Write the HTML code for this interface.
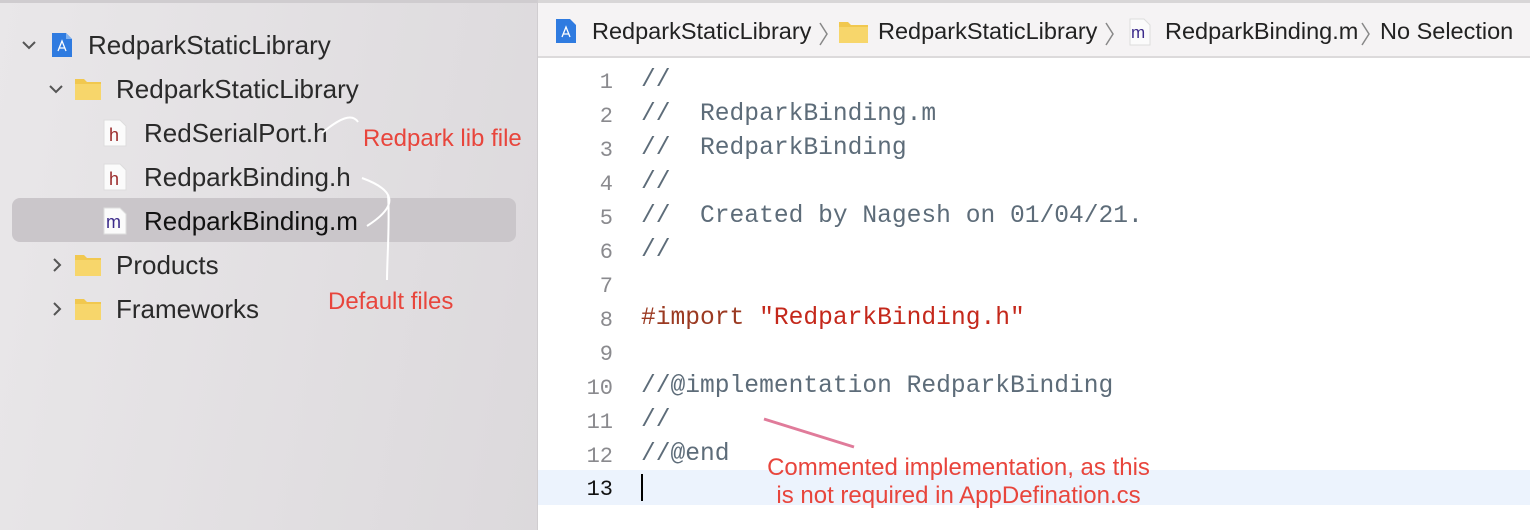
<!DOCTYPE html>
<html><head><style>
body{margin:0;width:1530px;height:530px;overflow:hidden;font-family:"Liberation Sans",sans-serif;background:#fff;position:relative}
#side{position:absolute;left:0;top:0;width:537px;height:530px;background:linear-gradient(100deg,#e9e7e9,#dcd9dc);border-right:1px solid #d0cdd0}
#side:before{content:"";position:absolute;left:0;top:0;right:0;height:3px;background:#cfcccf}
.row{position:absolute;height:44px;line-height:44px;font-size:26px;color:#2a2a2a;white-space:nowrap}
.sel{position:absolute;left:12px;top:198px;width:504px;height:44px;background:#cac6ca;border-radius:8px}
.ann{position:absolute;color:#e8453c;font-size:24px;white-space:nowrap}
#bar{position:absolute;left:538px;top:0;right:0;height:58px;background:#f5f3f4;border-bottom:2px solid #dcdadb;border-top:3px solid #d8d6d7;box-sizing:border-box}
.bc{position:absolute;top:15px;font-size:23.5px;color:#222;white-space:nowrap}
.ln{position:absolute;left:540px;width:73px;text-align:right;font-family:"Liberation Mono",monospace;font-size:22px;color:#8a8a8e}
.cd{position:absolute;left:641px;font-family:"Liberation Mono",monospace;font-size:24.6px;color:#5d6c79;white-space:pre}
</style></head><body>
<div id="side">
<div class="sel"></div>
<svg style="position:absolute;left:20px;top:36px" width="18" height="18"><path d="M3 6l6 6 6-6" stroke="#555" stroke-width="2" fill="none"/></svg>
<svg style="position:absolute;left:50px;top:31px" width="24" height="28"><path d="M2 2h14l6 6v18H2z" fill="#2f7be0"/><path d="M16 2v6h6" fill="#7fb1f0"/><path d="M8 20l4-10 4 10M9 17h6" stroke="#fff" stroke-width="1.3" fill="none"/></svg>
<div class="row" style="left:88px;top:23px">RedparkStaticLibrary</div>
<svg style="position:absolute;left:47px;top:80px" width="18" height="18"><path d="M3 6l6 6 6-6" stroke="#555" stroke-width="2" fill="none"/></svg>
<svg style="position:absolute;left:74px;top:76px" width="28" height="26"><path d="M1 3h9l3 3h14v18H1z" fill="#f1c84f"/><rect x="1" y="8" width="26" height="16" fill="#f7d66b"/></svg>
<div class="row" style="left:116px;top:67px">RedparkStaticLibrary</div>
<svg style="position:absolute;left:102px;top:118px" width="26" height="30"><path d="M2 2h16l6 6v20H2z" fill="#fbfbfb" stroke="#ddd"/><text x="7" y="23" font-size="18" fill="#9b2b2b" font-family="Liberation Sans">h</text></svg>
<div class="row" style="left:144px;top:111px">RedSerialPort.h</div>
<svg style="position:absolute;left:102px;top:162px" width="26" height="30"><path d="M2 2h16l6 6v20H2z" fill="#fbfbfb" stroke="#ddd"/><text x="7" y="23" font-size="18" fill="#9b2b2b" font-family="Liberation Sans">h</text></svg>
<div class="row" style="left:144px;top:155px">RedparkBinding.h</div>
<svg style="position:absolute;left:102px;top:206px" width="26" height="30"><path d="M2 2h16l6 6v20H2z" fill="#fbfbfb" stroke="#ddd"/><text x="4" y="22" font-size="18" fill="#3b2a8a" font-family="Liberation Sans">m</text></svg>
<div class="row" style="left:144px;top:199px;color:#111">RedparkBinding.m</div>
<svg style="position:absolute;left:48px;top:256px" width="18" height="18"><path d="M6 3l6 6-6 6" stroke="#555" stroke-width="2" fill="none"/></svg>
<svg style="position:absolute;left:74px;top:252px" width="28" height="26"><path d="M1 3h9l3 3h14v18H1z" fill="#f1c84f"/><rect x="1" y="8" width="26" height="16" fill="#f7d66b"/></svg>
<div class="row" style="left:116px;top:243px">Products</div>
<svg style="position:absolute;left:48px;top:300px" width="18" height="18"><path d="M6 3l6 6-6 6" stroke="#555" stroke-width="2" fill="none"/></svg>
<svg style="position:absolute;left:74px;top:296px" width="28" height="26"><path d="M1 3h9l3 3h14v18H1z" fill="#f1c84f"/><rect x="1" y="8" width="26" height="16" fill="#f7d66b"/></svg>
<div class="row" style="left:116px;top:287px">Frameworks</div>
<svg style="position:absolute;left:0;top:0" width="537" height="530"><path d="M322 133 C340 118 352 113 358 122" stroke="#fff" stroke-width="2" fill="none"/><path d="M362 178 C395 190 400 205 367 226 M388 195 C390 220 387 260 387 280" stroke="#fff" stroke-width="2" fill="none"/></svg>
<div class="ann" style="left:363px;top:125px">Redpark lib file</div>
<div class="ann" style="left:328px;top:288px">Default files</div>
</div>
<div id="bar">
<svg style="position:absolute;left:16px;top:14px" width="24" height="28"><path d="M2 2h14l6 6v18H2z" fill="#2f7be0"/><path d="M8 20l4-10 4 10M9 17h6" stroke="#fff" stroke-width="1.3" fill="none"/></svg>
<div class="bc" style="left:54px">RedparkStaticLibrary</div>
<svg style="position:absolute;left:280px;top:18px" width="12" height="28"><path d="M2 2l7 11-7 11" stroke="#888" stroke-width="1.5" fill="none"/></svg>
<svg style="position:absolute;left:300px;top:16px" width="32" height="26"><path d="M1 3h9l3 3h17v18H1z" fill="#f1c84f"/><rect x="1" y="8" width="29" height="16" fill="#f7d66b"/></svg>
<div class="bc" style="left:340px">RedparkStaticLibrary</div>
<svg style="position:absolute;left:566px;top:18px" width="12" height="28"><path d="M2 2l7 11-7 11" stroke="#888" stroke-width="1.5" fill="none"/></svg>
<svg style="position:absolute;left:590px;top:14px" width="24" height="30"><path d="M2 2h14l6 6v20H2z" fill="#fbfbfb" stroke="#ddd"/><text x="3" y="21" font-size="17" fill="#3b2a8a" font-family="Liberation Sans">m</text></svg>
<div class="bc" style="left:627px">RedparkBinding.m</div>
<svg style="position:absolute;left:822px;top:18px" width="12" height="28"><path d="M2 2l7 11-7 11" stroke="#888" stroke-width="1.5" fill="none"/></svg>
<div class="bc" style="left:842px">No Selection</div>
</div>
<div style="position:absolute;left:538px;top:470px;right:0;height:35px;background:#ecf3fd"></div>
<div class="ln" style="top:70px">1</div><div class="cd" style="top:67px">//</div>
<div class="ln" style="top:104px">2</div><div class="cd" style="top:101px">//  RedparkBinding.m</div>
<div class="ln" style="top:138px">3</div><div class="cd" style="top:135px">//  RedparkBinding</div>
<div class="ln" style="top:172px">4</div><div class="cd" style="top:169px">//</div>
<div class="ln" style="top:206px">5</div><div class="cd" style="top:203px">//  Created by Nagesh on 01/04/21.</div>
<div class="ln" style="top:240px">6</div><div class="cd" style="top:237px">//</div>
<div class="ln" style="top:274px">7</div>
<div class="ln" style="top:308px">8</div><div class="cd" style="top:305px;color:#9b3a22">#import <span style="color:#c4281b">"RedparkBinding.h"</span></div>
<div class="ln" style="top:342px">9</div>
<div class="ln" style="top:376px">10</div><div class="cd" style="top:373px">//@implementation RedparkBinding</div>
<div class="ln" style="top:410px">11</div><div class="cd" style="top:407px">//</div>
<div class="ln" style="top:444px">12</div><div class="cd" style="top:441px">//@end</div>
<div class="ln" style="top:477px;color:#111">13</div>
<div style="position:absolute;left:641px;top:474px;width:2px;height:27px;background:#000"></div>
<svg style="position:absolute;left:760px;top:415px" width="100" height="40"><path d="M4 4 L94 32" stroke="#e07b9a" stroke-width="3"/></svg>
<div class="ann" style="left:767px;top:454px;width:383px;text-align:center;line-height:28px">Commented implementation, as this<br>is not required in AppDefination.cs</div>
</body></html>
